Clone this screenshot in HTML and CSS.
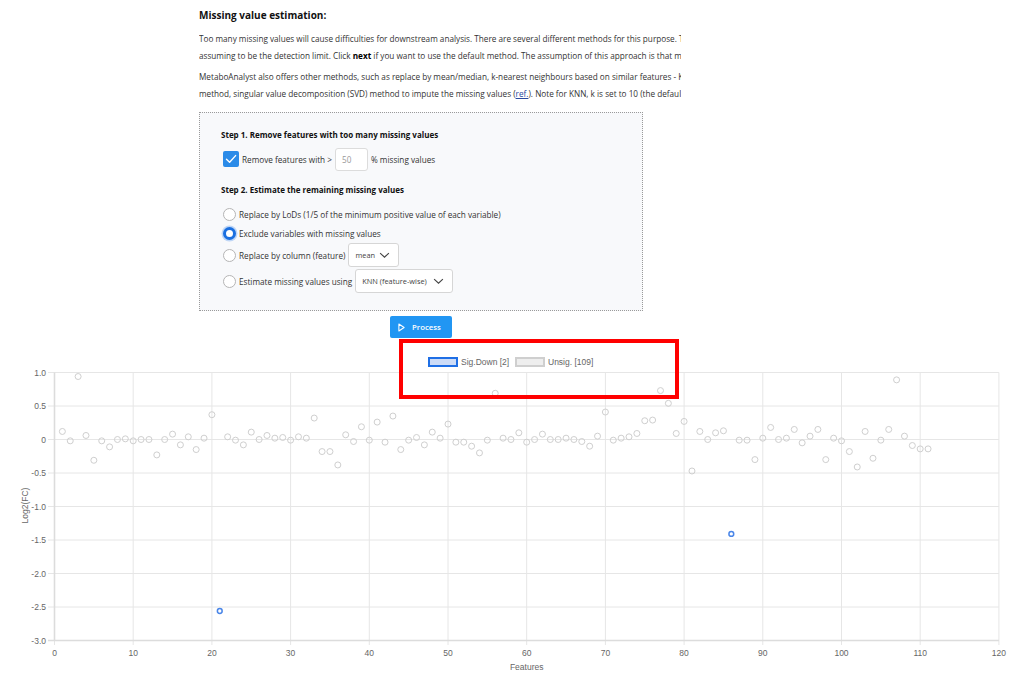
FILE: index.html
```html
<!DOCTYPE html>
<html lang="en">
<head>
<meta charset="utf-8">
<title>Missing value estimation</title>
<link rel="stylesheet" href="styles.css">
</head>
<body>
<div class="page">
  <section class="intro">
    <h2 class="title">Missing value estimation:</h2>
    <p class="para">
      <span class="line">Too many missing values will cause difficulties for downstream analysis. There are several different methods for this purpose. The</span>
      <span class="line">assuming to be the detection limit. Click <b>next</b> if you want to use the default method. The assumption of this approach is that most</span>
    </p>
    <p class="para para2">
      <span class="line">MetaboAnalyst also offers other methods, such as replace by mean/median, k-nearest neighbours based on similar features - KNN</span>
      <span class="line">method, singular value decomposition (SVD) method to impute the missing values (<a class="ref" href="#">ref.</a>). Note for KNN, k is set to 10 (the default).</span>
    </p>
  </section>

  <section class="panel">
    <div class="step-title">Step 1. Remove features with too many missing values</div>
    <div class="row row-check">
      <span class="checkbox">
        <svg viewBox="0 0 16 16" width="16" height="16"><path d="M3.5 8.3 L6.6 11.3 L12.6 4.6" fill="none" stroke="#fff" stroke-width="1.4" stroke-linecap="round" stroke-linejoin="round"/></svg>
      </span>
      <span class="label">Remove features with &gt;</span>
      <span class="input">50</span>
      <span class="label">% missing values</span>
    </div>
    <div class="step-title step2">Step 2. Estimate the remaining missing values</div>
    <div class="row row-r1"><span class="radio"></span><span class="label">Replace by LoDs (1/5 of the minimum positive value of each variable)</span></div>
    <div class="row row-r2"><span class="radio selected"></span><span class="label">Exclude variables with missing values</span></div>
    <div class="row row-r3"><span class="radio"></span><span class="label">Replace by column (feature)</span>
      <span class="select sel-mean"><span class="sel-text">mean</span>
        <svg class="chev" viewBox="0 0 12 8" width="11" height="7"><path d="M1 1.2 L6 6 L11 1.2" fill="none" stroke="#444" stroke-width="1.3"/></svg>
      </span>
    </div>
    <div class="row row-r4"><span class="radio"></span><span class="label">Estimate missing values using</span>
      <span class="select sel-knn"><span class="sel-text">KNN (feature-wise)</span>
        <svg class="chev" viewBox="0 0 12 8" width="11" height="7"><path d="M1 1.2 L6 6 L11 1.2" fill="none" stroke="#444" stroke-width="1.3"/></svg>
      </span>
    </div>
  </section>

  <div class="btn-row">
    <button class="process" type="button">
      <svg viewBox="0 0 8 10" width="7" height="9"><path d="M1 1 L7 5 L1 9 Z" fill="none" stroke="#fff" stroke-width="1.2" stroke-linejoin="round"/></svg>
      <span>Process</span>
    </button>
  </div>

  <section class="chart">
    <svg id="plot" class="plot" viewBox="0 338 1024 336" width="1024" height="336">
      <g class="grid">
        <line x1="54.5" y1="372.5" x2="54.5" y2="645"/>
        <line x1="133.2" y1="372.5" x2="133.2" y2="645"/>
        <line x1="211.9" y1="372.5" x2="211.9" y2="645"/>
        <line x1="290.6" y1="372.5" x2="290.6" y2="645"/>
        <line x1="369.3" y1="372.5" x2="369.3" y2="645"/>
        <line x1="448" y1="372.5" x2="448" y2="645"/>
        <line x1="526.7" y1="372.5" x2="526.7" y2="645"/>
        <line x1="605.4" y1="372.5" x2="605.4" y2="645"/>
        <line x1="684.1" y1="372.5" x2="684.1" y2="645"/>
        <line x1="762.8" y1="372.5" x2="762.8" y2="645"/>
        <line x1="841.5" y1="372.5" x2="841.5" y2="645"/>
        <line x1="920.2" y1="372.5" x2="920.2" y2="645"/>
        <line x1="998.9" y1="372.5" x2="998.9" y2="645"/>
        <line x1="48" y1="372.5" x2="998.9" y2="372.5"/>
        <line x1="48" y1="406" x2="998.9" y2="406"/>
        <line x1="48" y1="439.5" x2="998.9" y2="439.5"/>
        <line x1="48" y1="473" x2="998.9" y2="473"/>
        <line x1="48" y1="506.5" x2="998.9" y2="506.5"/>
        <line x1="48" y1="540" x2="998.9" y2="540"/>
        <line x1="48" y1="573.5" x2="998.9" y2="573.5"/>
        <line x1="48" y1="607" x2="998.9" y2="607"/>
      </g>
      <g class="axis">
        <line x1="54.5" y1="372.5" x2="54.5" y2="641"/>
        <line x1="48" y1="640.5" x2="998.9" y2="640.5"/>
      </g>
      <g class="ticks-y">
        <text x="46" y="375.5">1.0</text>
        <text x="46" y="409">0.5</text>
        <text x="46" y="442.5">0</text>
        <text x="46" y="476">-0.5</text>
        <text x="46" y="509.5">-1.0</text>
        <text x="46" y="543">-1.5</text>
        <text x="46" y="576.5">-2.0</text>
        <text x="46" y="610">-2.5</text>
        <text x="46" y="643.5">-3.0</text>
      </g>
      <g class="ticks-x">
        <text x="54.5" y="656">0</text>
        <text x="133.2" y="656">10</text>
        <text x="211.9" y="656">20</text>
        <text x="290.6" y="656">30</text>
        <text x="369.3" y="656">40</text>
        <text x="448" y="656">50</text>
        <text x="526.7" y="656">60</text>
        <text x="605.4" y="656">70</text>
        <text x="684.1" y="656">80</text>
        <text x="762.8" y="656">90</text>
        <text x="841.5" y="656">100</text>
        <text x="920.2" y="656">110</text>
        <text x="998.9" y="656">120</text>
      </g>
      <text class="axis-title" x="526.7" y="670">Features</text>
      <text class="axis-title" transform="translate(28 505.5) rotate(-90)" x="0" y="0">Log2(FC)</text>
      <g class="legend">
        <rect class="lg-sig" x="429" y="358" width="28" height="8"/>
        <text x="461" y="365">Sig.Down [2]</text>
        <rect class="lg-uns" x="516" y="358" width="28" height="8"/>
        <text x="548" y="365">Unsig. [109]</text>
      </g>
      <g id="pts-unsig" class="pts-unsig"></g>
      <g id="pts-sig" class="pts-sig"></g>
    </svg>
  </section>

  <div class="highlight"></div>
</div>
<script src="script.js"></script>
</body>
</html>
```

FILE: styles.css
```css
html, body {
  margin: 0;
  padding: 0;
  background: #ffffff;
}

body {
  font-family: "Open Sans", "Noto Sans", "DejaVu Sans", sans-serif;
  color: #222;
}

.page {
  position: relative;
  width: 1024px;
  height: 674px;
  overflow: hidden;
}

.intro {
  margin-left: 199px;
  width: 482px;
  overflow: hidden;
}

.title {
  margin: 0;
  font-size: 10px;
  font-weight: 700;
  line-height: 30px;
  color: #111;
}

.para {
  margin: 0;
  font-size: 8.2px;
  line-height: 17px;
  color: #333;
}

.para2 {
  margin-top: 4px;
}

.line {
  display: block;
  white-space: nowrap;
}

.para b {
  color: #000;
}

.ref {
  color: #2a4aa0;
  text-decoration: underline;
}

.panel {
  box-sizing: border-box;
  margin-left: 199px;
  margin-top: 10px;
  width: 444px;
  height: 199px;
  border: 1px dotted #9a9a9a;
  background: #f8f9fb;
  padding: 15px 0 0 21px;
}

.step-title {
  font-size: 8px;
  font-weight: 700;
  line-height: 14px;
  color: #111;
}

.step2 {
  margin-top: 12px;
}

.row {
  display: flex;
  align-items: center;
  font-size: 8.2px;
  color: #333;
}

.row-check {
  margin-top: 5px;
  height: 24px;
}

.checkbox {
  box-sizing: border-box;
  width: 16px;
  height: 16px;
  margin-left: 2px;
  margin-right: 3px;
  border-radius: 2px;
  background: #2b8be8;
  display: flex;
}

.input {
  box-sizing: border-box;
  width: 33px;
  height: 23px;
  margin: 0 3px 0 3px;
  padding-left: 6px;
  border: 1px solid #dcdcdc;
  border-radius: 3px;
  background: #fff;
  color: #999;
  display: flex;
  align-items: center;
}

.radio {
  box-sizing: border-box;
  width: 13px;
  height: 13px;
  margin-left: 2px;
  margin-right: 3px;
  border-radius: 50%;
  border: 1px solid #b5b5b5;
  background: #fff;
  flex: none;
}

.radio.selected {
  border: 3px solid #1a6fe0;
  box-shadow: 0 0 0 1.5px rgba(120, 170, 240, 0.45);
}

.row-r1 {
  margin-top: 10px;
  height: 14px;
}

.row-r2 {
  margin-top: 5px;
  height: 14px;
}

.row-r3 {
  margin-top: 3px;
  height: 24px;
}

.row-r4 {
  margin-top: 2px;
  height: 24px;
}

.select {
  box-sizing: border-box;
  height: 24px;
  margin-left: 3px;
  border: 1px solid #d6d6d6;
  border-radius: 3px;
  background: #fff;
  display: flex;
  align-items: center;
  justify-content: space-between;
  padding: 0 8px 0 6px;
  color: #444;
}

.sel-text {
  font-size: 7.4px;
}

.sel-mean {
  width: 51px;
}

.sel-knn {
  width: 98px;
}

.btn-row {
  margin-top: 5px;
  padding-left: 390px;
  height: 22px;
}

.process {
  box-sizing: border-box;
  width: 62px;
  height: 22px;
  border: 0;
  border-radius: 2px;
  background: #2196f3;
  color: #fff;
  font-family: "Open Sans", "Noto Sans", sans-serif;
  font-size: 7.8px;
  font-weight: 600;
  display: flex;
  align-items: center;
  padding: 0 0 0 8px;
  gap: 7px;
}

.chart {
  height: 336px;
}

.plot {
  display: block;
  font-family: "Liberation Sans", Arial, sans-serif;
}

.grid line {
  stroke: #e6e6e6;
  stroke-width: 1;
}

.axis line {
  stroke: #dcdcdc;
  stroke-width: 1.6;
}

.ticks-y text {
  font-size: 8.5px;
  fill: #666;
  text-anchor: end;
}

.ticks-x text {
  font-size: 8.5px;
  fill: #666;
  text-anchor: middle;
}

.axis-title {
  font-size: 8.5px;
  fill: #666;
  text-anchor: middle;
}

.legend text {
  font-size: 8.5px;
  fill: #666;
}

.lg-sig {
  fill: #cddcf7;
  stroke: #1f6fe5;
  stroke-width: 2;
}

.lg-uns {
  fill: #eeeeee;
  stroke: #cfcfcf;
  stroke-width: 2;
}

.pts-unsig circle {
  fill: none;
  stroke: #cfcfcf;
  stroke-width: 1;
}

.pts-sig circle {
  fill: #fff;
  stroke: #4a86e8;
  stroke-width: 1.5;
}

.highlight {
  position: absolute;
  left: 399px;
  top: 339px;
  width: 280px;
  height: 60px;
  box-sizing: border-box;
  border: 4.5px solid #ff0000;
}
```

FILE: script.js
```js
(function () {
  var vals = [
    0.12, -0.02, 0.94, 0.06, -0.31, -0.02, -0.11, 0.0, 0.01, -0.02,
    0.0, 0.0, -0.23, 0.0, 0.08, -0.08, 0.04, -0.15, 0.02, 0.37,
    -2.56, 0.04, -0.01, -0.08, 0.11, 0.0, 0.06, 0.02, 0.03, -0.01,
    0.04, 0.02, 0.32, -0.18, -0.18, -0.38, 0.07, -0.03, 0.19, -0.01,
    0.26, -0.04, 0.35, -0.15, -0.01, 0.03, -0.08, 0.11, 0.02, 0.23,
    -0.04, -0.04, -0.1, -0.2, -0.01, 0.69, 0.02, 0.0, 0.1, -0.04,
    0.0, 0.08, 0.0, 0.0, 0.02, 0.0, -0.03, -0.1, 0.05, 0.41,
    -0.01, 0.02, 0.04, 0.09, 0.28, 0.29, 0.73, 0.54, 0.09, 0.27,
    -0.47, 0.12, 0.0, 0.1, 0.13, -1.41, -0.01, -0.01, -0.3, 0.02,
    0.18, 0.0, 0.02, 0.15, -0.05, 0.05, 0.15, -0.3, 0.02, -0.02,
    -0.18, -0.41, 0.12, -0.28, -0.01, 0.15, 0.89, 0.05, -0.09, -0.14,
    -0.14
  ];
  var sig = { 21: true, 86: true };
  var ns = "http://www.w3.org/2000/svg";
  var gU = document.getElementById("pts-unsig");
  var gS = document.getElementById("pts-sig");
  for (var i = 0; i < vals.length; i++) {
    var idx = i + 1;
    var c = document.createElementNS(ns, "circle");
    c.setAttribute("cx", (54.5 + 7.87 * idx).toFixed(2));
    c.setAttribute("cy", (439.5 - 67 * vals[i]).toFixed(2));
    if (sig[idx]) {
      c.setAttribute("r", "2.4");
      gS.appendChild(c);
    } else {
      c.setAttribute("r", "3");
      gU.appendChild(c);
    }
  }
})();
```
